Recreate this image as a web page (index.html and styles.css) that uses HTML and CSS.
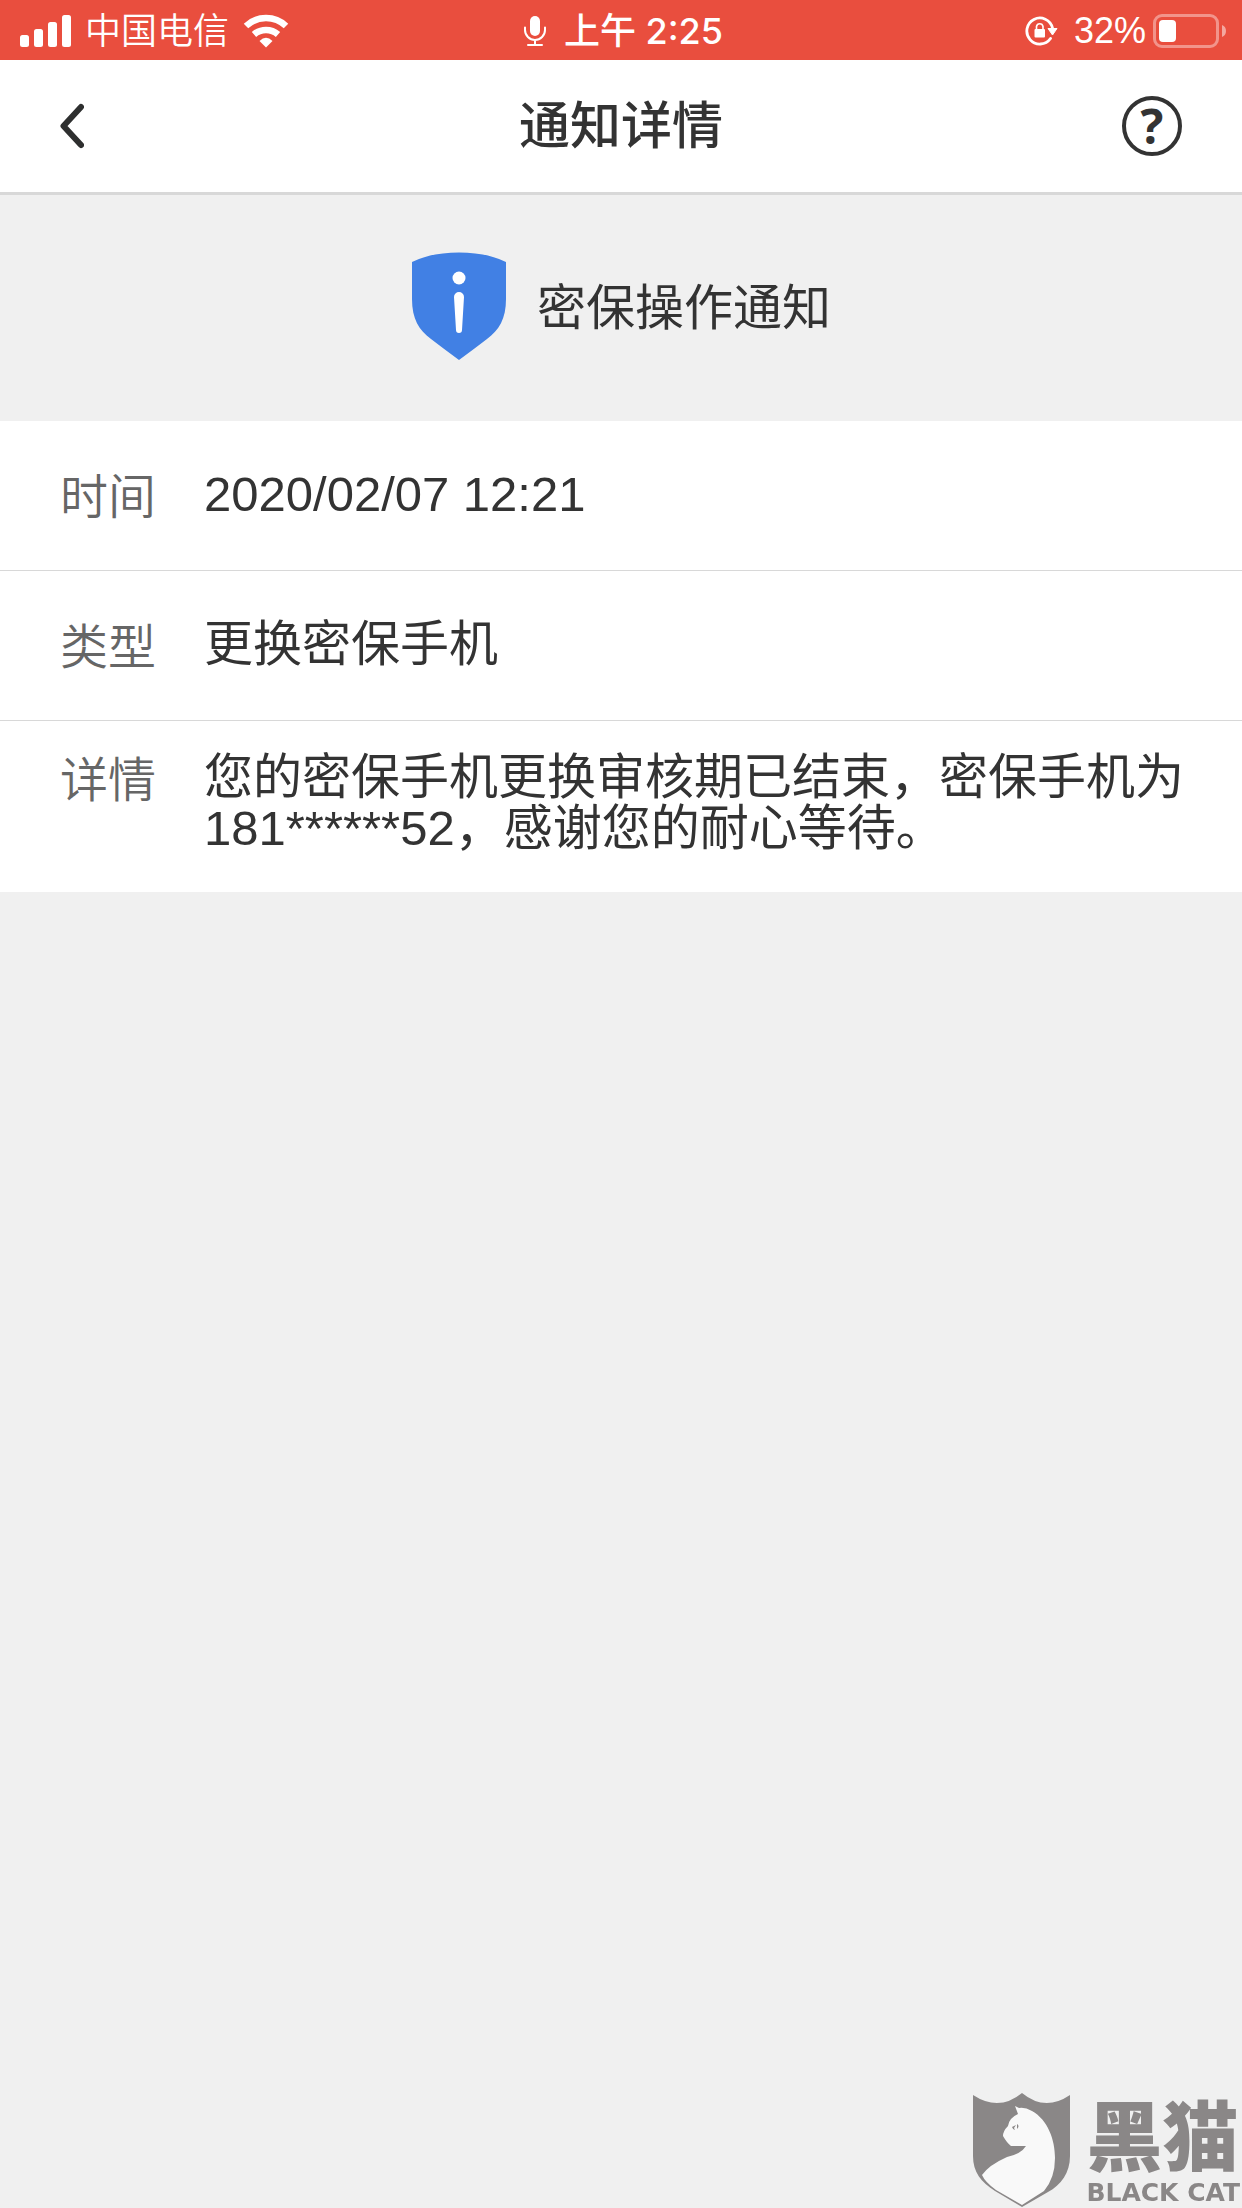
FILE: index.html
```html
<!DOCTYPE html>
<html lang="zh-CN">
<head>
  <meta charset="UTF-8" />
  <meta name="viewport" content="width=device-width, initial-scale=1" />
  <title>通知详情</title>
  <link rel="stylesheet" href="styles.css">
</head>
<body>
  <div class="status-bar">
    <div class="status-left">
      <svg class="signal" width="51" height="32" viewBox="0 0 51 32" fill="#fff" aria-hidden="true">
        <rect x="0" y="20" width="9" height="12" rx="2.5" />
        <rect x="14" y="14" width="9" height="18" rx="2.5" />
        <rect x="28" y="7" width="9" height="25" rx="2.5" />
        <rect x="42" y="0" width="9" height="32" rx="2.5" />
      </svg>
      <span class="carrier">中国电信</span>
      <svg width="46" height="34" viewBox="0 0 46 34" aria-hidden="true">
        <path d="M3 12 A29 29 0 0 1 43 12" fill="none" stroke="#fff" stroke-width="6.5" />
        <path d="M11 20.5 A18 18 0 0 1 35 20.5" fill="none" stroke="#fff" stroke-width="6.5" />
        <path d="M16.500 27 Q23 20.500 29.500 27 L23 33.500 Z" fill="#fff" />
      </svg>
    </div>
    <div class="status-center">
      <svg width="22" height="30" viewBox="0 0 22 30" aria-hidden="true">
        <rect x="6" y="0" width="10" height="20" rx="5" fill="#fff" />
        <path d="M1 11.500 V14 A10 10 0 0 0 21 14 V11.500 M11 24 V28" fill="none" stroke="#fff" stroke-width="2" stroke-linecap="round" />
        <rect x="3" y="28" width="16" height="2" rx="1" fill="#fff" />
      </svg>
      <span class="clock">上午 2:25</span>
    </div>
    <div class="status-right">
      <svg width="33" height="30" viewBox="0 0 33 30" aria-hidden="true">
        <path d="M25.500 22.500 A13 13 0 1 1 27.500 12" fill="none" stroke="#fff" stroke-width="2.800" stroke-linecap="round" />
        <path d="M23 12.500 H32 L27.500 19 Z" fill="#fff" stroke="#fff" stroke-width="1" stroke-linejoin="round" />
        <rect x="9.500" y="13" width="10.500" height="8.500" rx="1" fill="#fff" />
        <path d="M11.500 14 V10.500 A3.300 3.300 0 0 1 18 10.500 V14" fill="none" stroke="#fff" stroke-width="1.600" />
      </svg>
      <span class="percent">32%</span>
      <svg width="74" height="34" viewBox="0 0 74 34" aria-hidden="true">
        <rect x="1.500" y="1.500" width="63" height="31" rx="7.500" fill="none" stroke="#fff" stroke-opacity=".4" stroke-width="3" />
        <rect x="6" y="6" width="17" height="22" rx="4" fill="#fff" />
        <path d="M69 11 Q73 12.500 73 17 Q73 21.500 69 23 Z" fill="#fff" fill-opacity=".5" />
      </svg>
    </div>
  </div>

  <header class="nav-bar">
    <button class="back-btn" type="button" aria-label="返回">
      <svg width="24" height="46" viewBox="0 0 24 46" fill="none" stroke="#2e2f2f" stroke-width="6" stroke-linecap="round" stroke-linejoin="round" aria-hidden="true">
        <path d="M21 4 L3.500 23 L21 42" />
      </svg>
    </button>
    <h1>通知详情</h1>
    <button class="help-btn" type="button" aria-label="帮助">?</button>
  </header>

  <main>
    <div class="notice-head">
      <svg width="96" height="108" viewBox="0 0 96 108" aria-hidden="true">
        <path d="M1 10 Q20 0.500 48 0.500 Q76 0.500 95 10 V47 C95 67 88 78 76 87 Q63 97 48 108 Q33 97 20 87 C8 78 1 67 1 47 Z" fill="#4180e4" />
        <circle cx="48" cy="26" r="6.500" fill="#fff" />
        <path d="M43 45 A5 5 0 0 1 53 45 L51 78 A3 3 0 0 1 45 78 Z" fill="#fff" />
      </svg>
      <h2>密保操作通知</h2>
    </div>

    <dl class="detail-list">
      <div class="detail-row">
        <dt>时间</dt>
        <dd>2020/02/07 12:21</dd>
      </div>
      <div class="detail-row">
        <dt>类型</dt>
        <dd>更换密保手机</dd>
      </div>
      <div class="detail-row detail-text">
        <dt>详情</dt>
        <dd>您的密保手机更换审核期已结束，密保手机为181******52，感谢您的耐心等待。</dd>
      </div>
    </dl>
  </main>

  <div class="watermark">
    <svg width="98" height="115" viewBox="0 0 98 115" aria-hidden="true">
      <path d="M0 2 Q26 19 49 0 Q72 19 97 2 V63 C97 80 88 92 75 99 L49 114 L22 98 C8 89 0 79 0 63 Z" fill="#8a8787" />
      <path d="M42 13 L46 15 Q52 14 59 18 C75 27 82 47 82 65 Q82 85 71 98 L49 112 L23 97 Q12 89 9 82 Q16 72 34 64 Q48 61 53 53 L38 53 Q34 50 30 43 Q30 38 35 33 Q36 25 45 21 Z" fill="#f9f9f9" />
      <path d="M39 34 L43 32 L41 35 L42 37 Q40 37 39 34 Z M44 31 Q47 33 44 36 Z" fill="#8a8787" />
    </svg>
    <div class="watermark-text">
      <span class="watermark-cn">黑猫</span>
      <span class="watermark-en">BLACK CAT</span>
    </div>
  </div>
</body>
</html>
```
FILE: styles.css
```css
* {
  box-sizing: border-box;
}
body {
  font-family: Inter, "Noto Sans CJK SC", sans-serif;
  background-color: #f0f0f0;
  color: #333;
  margin: 0;
}
h1, h2, dl, dd {
  margin: 0;
}
svg {
  display: block;
  flex: none;
}
button {
  padding: 0;
  background: none;
  border: none;
  color: inherit;
  cursor: pointer;
}

/* Status bar */
.status-bar {
  display: grid;
  grid-template-columns: 1fr auto 1fr;
  align-items: center;
  height: 60px;
  padding: 0 15px 0 20px;
  background: #e94e3e;
  color: #fff;
  font-size: 36px;
  line-height: 62px;
}
.status-left, .status-center, .status-right {
  display: flex;
  align-items: center;
}
.status-left {
  gap: 14px;
}
.status-center {
  gap: 18px;
}
.status-right {
  justify-content: flex-end;
}
.carrier {
  font-weight: 350;
}
.clock {
  font-weight: 500;
}
.percent {
  margin: 0 7px 0 16px;
  font-family: "Liberation Sans", Arial, sans-serif;
}

/* Navigation */
.nav-bar {
  display: flex;
  align-items: center;
  justify-content: space-between;
  height: 135px;
  padding: 0 60px;
  background: #fff;
  border-bottom: 3px solid #d8d8d8;
}
.nav-bar h1 {
  font-size: 51px;
  font-weight: 500;
  line-height: 60px;
}
.back-btn {
  width: 60px;
  height: 60px;
}
.help-btn {
  width: 60px;
  height: 60px;
  border: 4px solid #333;
  border-radius: 50%;
  font: bold 48px/48px "Open Sans", sans-serif;
}

/* Notice */
.notice-head {
  display: flex;
  align-items: center;
  justify-content: center;
  gap: 30px;
  padding: 57px 0 61px;
}
.notice-head h2 {
  padding-bottom: 6px;
  font-size: 49px;
  font-weight: 400;
}
.detail-list {
  background: #fff;
}
.detail-row {
  display: flex;
  align-items: flex-start;
  gap: 48px;
  padding: 48px 48px 50px 60px;
}
.detail-row + .detail-row {
  border-top: 1px solid #d8d8d8;
}
.detail-text {
  padding-top: 31px;
  padding-bottom: 38px;
}
dt {
  flex: none;
  padding-top: 4px;
  color: #666;
  font-size: 48px;
  font-weight: 350;
  line-height: 47px;
}
dd {
  flex: 1;
  font-family: "Liberation Sans", "Noto Sans CJK SC", sans-serif;
  font-size: 49px;
  line-height: 51px;
}

/* Watermark */
.watermark {
  position: fixed;
  right: 0;
  bottom: 0;
  display: flex;
  gap: 15px;
  padding-right: 2px;
  color: #8a8787;
}
.watermark-text {
  display: flex;
  flex-direction: column;
  justify-content: space-between;
}
.watermark-cn {
  font-family: "Noto Sans CJK SC", sans-serif;
  font-size: 76px;
  font-weight: 900;
  line-height: 78px;
}
.watermark-en {
  font: bold 25px/30px "DejaVu Sans", sans-serif;
}
```
